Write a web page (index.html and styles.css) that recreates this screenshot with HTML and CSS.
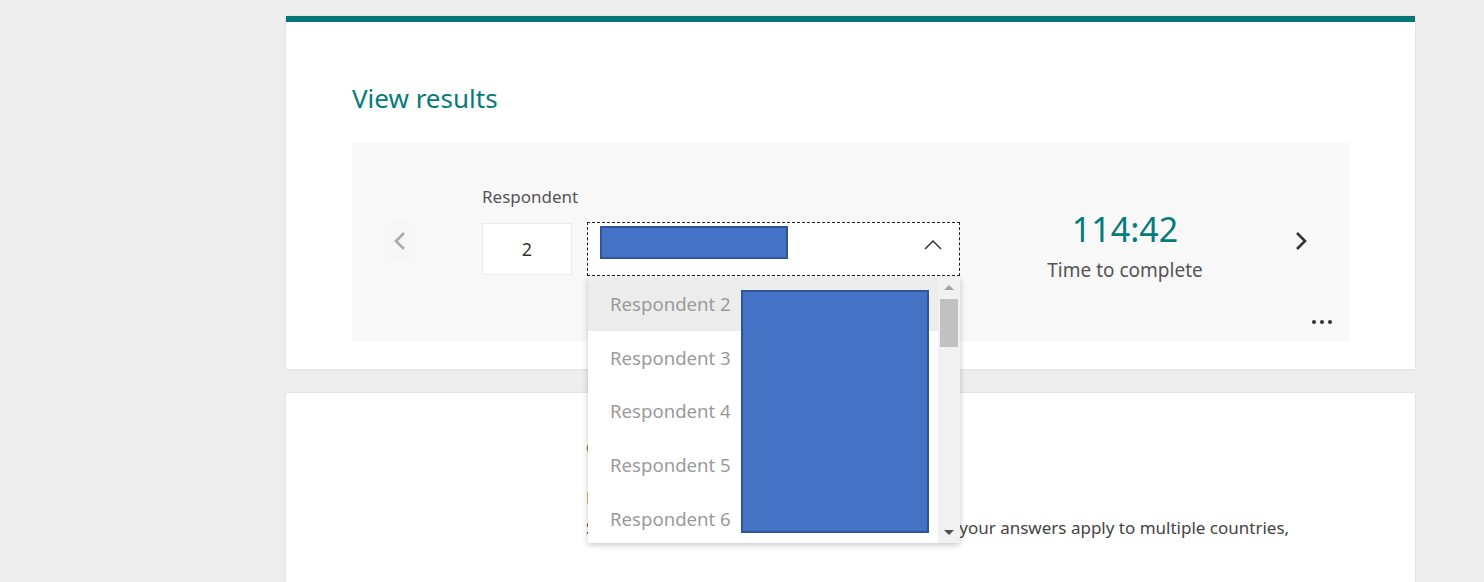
FILE: index.html
```html
<!DOCTYPE html>
<html>
<head>
<meta charset="utf-8">
<link rel="stylesheet" href="styles.css">
</head>
<body>
<div class="page">
  <section class="card card-top">
    <h1 class="title">View results</h1>
    <div class="panel">
      <button class="nav nav-prev" aria-label="Previous">
        <svg width="14" height="20" viewBox="0 0 14 20"><path d="M11 2 L3 10 L11 18" fill="none" stroke="#aaaaaa" stroke-width="2.6"/></svg>
      </button>
      <div class="resp">
        <div class="resp-label">Respondent</div>
        <div class="resp-row">
          <div class="num">2</div>
          <div class="dd">
            <div class="dd-redact"></div>
            <svg class="dd-chev" width="18" height="11" viewBox="0 0 18 11"><path d="M1 10 L9 2 L17 10" fill="none" stroke="#333" stroke-width="1.5"/></svg>
            <div class="dd-list">
              <div class="dd-items">
                <div class="dd-item active">Respondent 2</div>
                <div class="dd-item">Respondent 3</div>
                <div class="dd-item">Respondent 4</div>
                <div class="dd-item">Respondent 5</div>
                <div class="dd-item">Respondent 6</div>
              </div>
              <div class="list-redact"></div>
              <div class="scroll">
                <div class="sc-up"></div>
                <div class="sc-thumb"></div>
                <div class="sc-down"></div>
              </div>
            </div>
          </div>
        </div>
      </div>
      <div class="time">
        <div class="time-val">114:42</div>
        <div class="time-label">Time to complete</div>
      </div>
      <div class="right-col">
        <button class="nav nav-next" aria-label="Next">
          <svg width="14" height="20" viewBox="0 0 14 20"><path d="M3 2 L11 10 L3 18" fill="none" stroke="#333333" stroke-width="2.6"/></svg>
        </button>
        <div class="more"><span></span><span></span><span></span></div>
      </div>
    </div>
  </section>
  <section class="card card-body">
    <h2 class="q-title">Country</h2>
    <p class="q-text">Please choose the country that you work in.<br>Select all that apply. If you work in several or if your answers apply to multiple countries,</p>
  </section>
</div>
</body>
</html>
```

FILE: styles.css
```css
* { box-sizing: border-box; }
html, body { margin: 0; padding: 0; }
body {
  background: #eeeeee;
  font-family: "Noto Sans", "Open Sans", sans-serif;
  width: 1484px;
  height: 582px;
  overflow: hidden;
}
.page {
  padding-left: 286px;
  padding-top: 16px;
  width: 1415px;
}
.card {
  background: #ffffff;
  box-shadow: 0 0 2px rgba(0,0,0,0.12);
}
.card-top {
  border-top: 6px solid #077575;
  padding: 58px 66px 27px 66px;
}
.title {
  margin: 0 0 27px 0;
  font-weight: 400;
  font-size: 26px;
  line-height: 36px;
  color: #077a7a;
}
.panel {
  background: #f8f8f8;
  height: 199px;
  display: flex;
  align-items: flex-start;
  padding: 43px 0 0 38px;
}
.nav {
  border: 0;
  background: transparent;
  padding: 0;
  width: 20px;
  height: 40px;
  display: flex;
  align-items: center;
  justify-content: center;
}
.nav-prev {
  margin-top: 35px;
  margin-right: 72px;
  background: #f6f6f6;
}
.resp-label {
  font-size: 17px;
  line-height: 22px;
  color: #555555;
  margin-bottom: 14px;
}
.resp-row {
  display: flex;
  align-items: center;
}
.num {
  width: 90px;
  height: 52px;
  background: #ffffff;
  border: 1px solid #ebebeb;
  display: flex;
  align-items: center;
  justify-content: center;
  font-size: 18px;
  color: #333333;
  margin-right: 15px;
}
.dd {
  position: relative;
  width: 373px;
  height: 54px;
  background: #ffffff;
  border: 1px dashed #222222;
}
.dd-redact {
  position: absolute;
  left: 12px;
  top: 3px;
  width: 188px;
  height: 33px;
  background: #4472c4;
  border: 2px solid #2f5597;
}
.dd-chev {
  position: absolute;
  right: 17px;
  top: 16px;
}
.dd-list {
  position: absolute;
  left: 0;
  top: 54px;
  width: 372px;
  height: 266px;
  background: #ffffff;
  box-shadow: 0 2px 6px rgba(0,0,0,0.22);
  z-index: 5;
  display: flex;
}
.dd-items {
  flex: 1;
}
.dd-item {
  height: 53.6px;
  display: flex;
  align-items: center;
  padding-left: 22px;
  font-size: 18.6px;
  color: #9a9a9a;
}
.dd-item.active {
  background: #ececec;
}
.list-redact {
  position: absolute;
  left: 153px;
  top: 13px;
  width: 188px;
  height: 243px;
  background: #4472c4;
  border: 2px solid #2f5597;
}
.scroll {
  width: 22px;
  background: #f1f1f1;
  position: relative;
}
.sc-up {
  position: absolute;
  left: 6px;
  top: 8px;
  width: 0; height: 0;
  border-left: 5px solid transparent;
  border-right: 5px solid transparent;
  border-bottom: 5px solid #a3a3a3;
}
.sc-thumb {
  position: absolute;
  left: 2px;
  top: 22px;
  width: 18px;
  height: 48px;
  background: #c1c1c1;
}
.sc-down {
  position: absolute;
  left: 6px;
  bottom: 8px;
  width: 0; height: 0;
  border-left: 5px solid transparent;
  border-right: 5px solid transparent;
  border-top: 5px solid #505050;
}
.time {
  width: 160px;
  margin-left: 85px;
  margin-top: 22px;
  text-align: center;
}
.time-val {
  font-size: 34px;
  line-height: 42px;
  color: #077a7a;
}
.time-label {
  font-size: 19px;
  line-height: 24px;
  color: #555555;
  margin-top: 8px;
}
.right-col {
  margin-left: 88px;
  height: 156px;
  display: flex;
  flex-direction: column;
  align-items: flex-end;
  width: 40px;
}
.nav-next {
  margin-top: 35px;
  margin-right: 22px;
}
.more {
  margin-top: 59px;
  margin-right: 1px;
  display: flex;
  gap: 4px;
}
.more span {
  width: 4px;
  height: 4px;
  border-radius: 50%;
  background: #333333;
}
.card-body {
  margin-top: 24px;
  height: 300px;
  padding: 40px 0 0 300px;
}
.q-title {
  margin: 0;
  font-size: 20px;
  font-weight: 600;
  line-height: 30px;
  color: #0b4f4f;
}
.q-text {
  margin: 20px 0 0 0;
  font-size: 17px;
  line-height: 30px;
  color: #444444;
}
```
